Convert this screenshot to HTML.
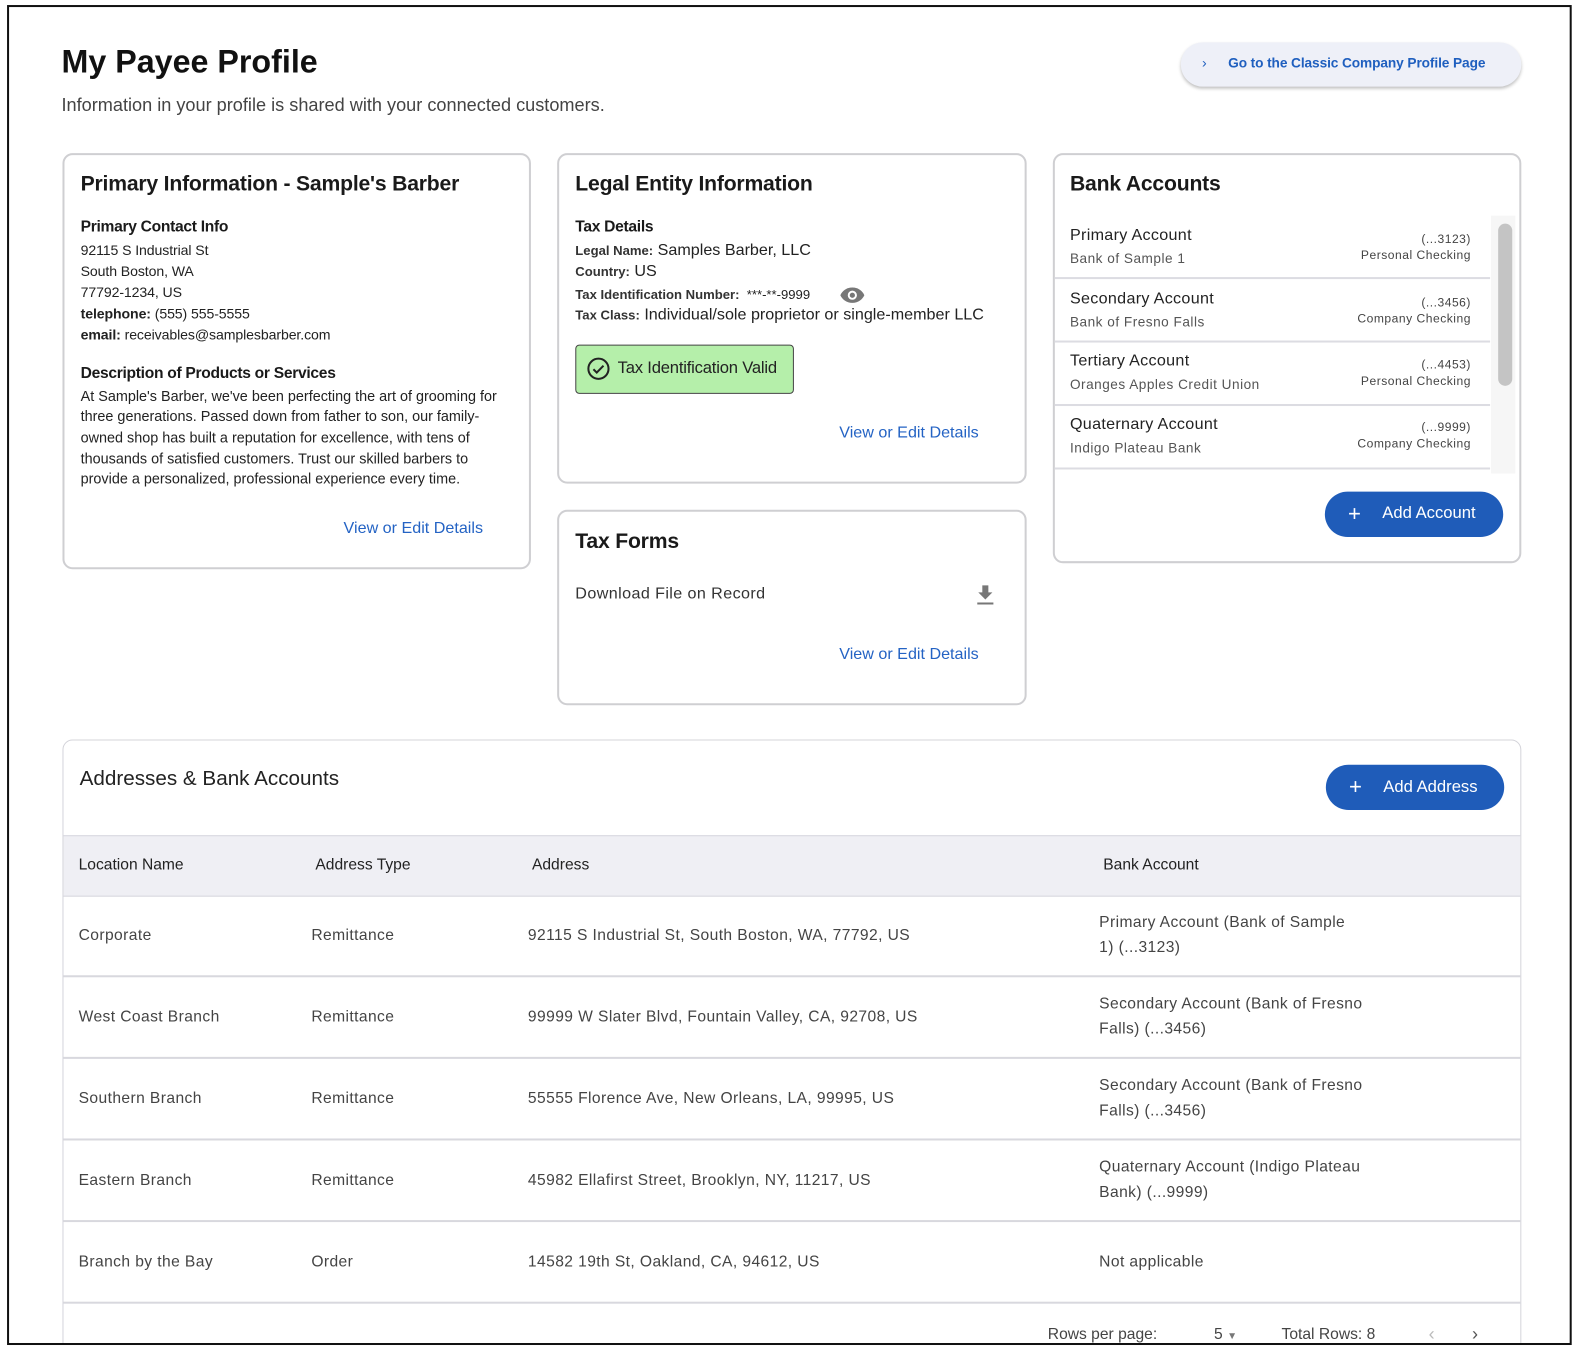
<!DOCTYPE html>
<html><head><meta charset="utf-8">
<style>
html,body{margin:0;padding:0;background:#fff;}
body{width:1580px;height:1352px;overflow:hidden;position:relative;font-family:"Liberation Sans",sans-serif;}
#wrap{position:absolute;left:0;top:0;width:1560px;height:1335px;transform-origin:0 0;transform:scale(1.0075,1.0075);}
#frame{position:absolute;left:7px;top:5px;width:1549px;height:1326px;border:2px solid #111;overflow:hidden;background:#fff;}
#in{position:absolute;left:-9px;top:-7px;width:1560px;height:1400px;}
.t{position:absolute;white-space:nowrap;line-height:1;}
.card{position:absolute;border:2px solid #cfcfd2;border-radius:10px;background:#fff;box-sizing:border-box;}
.h{font-weight:bold;font-size:21px;color:#1a1a1a;letter-spacing:-0.2px;}
.sh{font-weight:bold;font-size:15.5px;color:#1a1a1a;letter-spacing:-0.3px;}
.s{font-size:14px;color:#222;letter-spacing:-0.1px;}
.p{font-size:14.3px;color:#222;letter-spacing:0px;}
.lk{font-size:16px;color:#2463c4;}
.btn{position:absolute;background:#1f5cb9;border-radius:23px;color:#fff;}
.row{position:absolute;left:0;right:0;border-bottom:2px solid #dcdce2;}
.c{font-size:15.5px;color:#444;letter-spacing:0.4px;}
.bt{font-size:16px;color:#222;letter-spacing:0.3px;}
.bs{font-size:13.5px;color:#555;letter-spacing:0.5px;}
.br{font-size:12px;color:#444;letter-spacing:0.5px;text-align:right;}
</style></head><body>
<div id="wrap">
<div id="frame"><div id="in">

<div class="t" style="left:61px;top:45px;font-size:32px;font-weight:bold;color:#111;">My Payee Profile</div>
<div class="t" style="left:61px;top:95px;font-size:18px;color:#444;">Information in your profile is shared with your connected customers.</div>

<div style="position:absolute;left:1172px;top:42px;width:338px;height:44px;border-radius:22px;background:#eef0f8;box-shadow:0 2px 3px rgba(0,0,0,0.25);"></div>
<div class="t" style="left:1193px;top:55px;font-size:14px;color:#1f5fbf;">›</div>
<div class="t" style="left:1219px;top:56px;font-size:13.6px;font-weight:bold;color:#1f5fbf;letter-spacing:-0.1px;">Go to the Classic Company Profile Page</div>

<!-- Primary card -->
<div class="card" style="left:62px;top:152px;width:465px;height:413px;"></div>
<div class="t h" style="left:80px;top:172px;">Primary Information - Sample's Barber</div>
<div class="t sh" style="left:80px;top:218px;">Primary Contact Info</div>
<div class="t s" style="left:80px;top:241px;">92115 S Industrial St</div>
<div class="t s" style="left:80px;top:262px;">South Boston, WA</div>
<div class="t s" style="left:80px;top:283px;">77792-1234, US</div>
<div class="t s" style="left:80px;top:304px;"><b>telephone:</b> (555) 555-5555</div>
<div class="t s" style="left:80px;top:325px;"><b>email:</b> receivables@samplesbarber.com</div>
<div class="t sh" style="left:80px;top:363px;">Description of Products or Services</div>
<div class="t p" style="left:80px;top:387px;">At Sample's Barber, we've been perfecting the art of grooming for</div>
<div class="t p" style="left:80px;top:407px;">three generations. Passed down from father to son, our family-</div>
<div class="t p" style="left:80px;top:428px;">owned shop has built a reputation for excellence, with tens of</div>
<div class="t p" style="left:80px;top:449px;">thousands of satisfied customers. Trust our skilled barbers to</div>
<div class="t p" style="left:80px;top:469px;">provide a personalized, professional experience every time.</div>
<div class="t lk" style="left:341px;top:517px;">View or Edit Details</div>

<!-- Legal card -->
<div class="card" style="left:553px;top:152px;width:466px;height:328px;"></div>
<div class="t h" style="left:571px;top:172px;">Legal Entity Information</div>
<div class="t sh" style="left:571px;top:218px;">Tax Details</div>
<div class="t" style="left:571px;top:241px;font-size:16px;color:#222;"><b style="font-size:13px;color:#333;">Legal Name:</b> Samples Barber, LLC</div>
<div class="t" style="left:571px;top:262px;font-size:16px;color:#222;"><b style="font-size:13px;color:#333;">Country:</b> US</div>
<div class="t" style="left:571px;top:286px;font-size:13px;color:#222;"><b style="color:#333;">Tax Identification Number:</b>&nbsp; ***-**-9999</div>
<svg style="position:absolute;left:833px;top:284px" width="26" height="18" viewBox="0 0 24 16"><path d="M12 1C6.5 1 2.5 4.5 1 8c1.5 3.5 5.5 7 11 7s9.5-3.5 11-7C21.5 4.5 17.5 1 12 1z" fill="#777"/><circle cx="12" cy="8" r="4.2" fill="#fff"/><circle cx="12" cy="8" r="2.4" fill="#777"/></svg>
<div class="t" style="left:571px;top:305px;font-size:16px;color:#222;"><b style="font-size:13px;color:#333;">Tax Class:</b> Individual/sole proprietor or single-member LLC</div>
<div style="position:absolute;left:571px;top:342px;width:217px;height:49px;background:#b5efaa;border:1px solid #444;border-radius:4px;box-sizing:border-box;"></div>
<svg style="position:absolute;left:582px;top:354px" width="24" height="24" viewBox="0 0 24 24"><circle cx="12" cy="12" r="10" fill="none" stroke="#222" stroke-width="2"/><path d="M7 12.5l3.3 3.3L17 9" fill="none" stroke="#222" stroke-width="2"/></svg>
<div class="t" style="left:613px;top:357px;font-size:16.5px;color:#222;letter-spacing:-0.2px;">Tax Identification Valid</div>
<div class="t lk" style="left:833px;top:422px;">View or Edit Details</div>

<!-- Tax forms -->
<div class="card" style="left:553px;top:506px;width:466px;height:194px;"></div>
<div class="t h" style="left:571px;top:527px;">Tax Forms</div>
<div class="t" style="left:571px;top:582px;font-size:16px;color:#333;letter-spacing:0.4px;">Download File on Record</div>
<svg style="position:absolute;left:968px;top:580px" width="20" height="22" viewBox="0 0 20 22"><path d="M7 1h6v7h4l-7 7-7-7h4z" fill="#777"/><rect x="2" y="18" width="16" height="2" fill="#777"/></svg>
<div class="t lk" style="left:833px;top:642px;">View or Edit Details</div>

<!-- Bank card -->
<div class="card" style="left:1045px;top:152px;width:465px;height:407px;"></div>
<div class="t h" style="left:1062px;top:172px;">Bank Accounts</div>
<div style="position:absolute;left:1047px;top:214px;width:432px;height:256px;">
  <div class="row" style="top:0;height:61px;"></div>
  <div class="row" style="top:63px;height:61px;"></div>
  <div class="row" style="top:126px;height:61px;"></div>
  <div class="row" style="top:189px;height:61px;"></div>
</div>
<div style="position:absolute;left:1480px;top:214px;width:24px;height:256px;background:#f6f6f6;"></div>
<div style="position:absolute;left:1487px;top:222px;width:14px;height:161px;background:#c4c4c4;border-radius:7px;"></div>

<div class="t bt" style="left:1062px;top:226px;">Primary Account</div>
<div class="t bs" style="left:1062px;top:250px;">Bank of Sample 1</div>
<div class="t br" style="right:100px;top:231px;">(...3123)</div>
<div class="t br" style="right:100px;top:247px;">Personal Checking</div>

<div class="t bt" style="left:1062px;top:289px;">Secondary Account</div>
<div class="t bs" style="left:1062px;top:313px;">Bank of Fresno Falls</div>
<div class="t br" style="right:100px;top:294px;">(...3456)</div>
<div class="t br" style="right:100px;top:310px;">Company Checking</div>

<div class="t bt" style="left:1062px;top:351px;">Tertiary Account</div>
<div class="t bs" style="left:1062px;top:375px;">Oranges Apples Credit Union</div>
<div class="t br" style="right:100px;top:356px;">(...4453)</div>
<div class="t br" style="right:100px;top:372px;">Personal Checking</div>

<div class="t bt" style="left:1062px;top:414px;">Quaternary Account</div>
<div class="t bs" style="left:1062px;top:438px;">Indigo Plateau Bank</div>
<div class="t br" style="right:100px;top:418px;">(...9999)</div>
<div class="t br" style="right:100px;top:434px;">Company Checking</div>

<div class="btn" style="left:1315px;top:488px;width:177px;height:45px;"></div>
<div class="t" style="left:1338px;top:499px;font-size:22px;color:#fff;">+</div>
<div class="t" style="left:1372px;top:501px;font-size:16.5px;color:#fff;">Add Account</div>

<!-- Addresses -->
<div class="card" style="left:62px;top:734px;width:1448px;height:700px;border-width:1px;border-color:#d4d4da;"></div>
<div class="t" style="left:79px;top:763px;font-size:20.5px;color:#222;">Addresses &amp; Bank Accounts</div>
<div class="btn" style="left:1316px;top:759px;width:177px;height:45px;"></div>
<div class="t" style="left:1339px;top:770px;font-size:22px;color:#fff;">+</div>
<div class="t" style="left:1373px;top:773px;font-size:16.5px;color:#fff;">Add Address</div>

<div style="position:absolute;left:63px;top:829px;width:1446px;height:59px;background:#efeff4;border-top:1px solid #d6d6de;border-bottom:1px solid #d6d6de;"></div>
<div class="t" style="left:78px;top:851px;font-size:15.5px;color:#222;">Location Name</div>
<div class="t" style="left:313px;top:851px;font-size:15.5px;color:#222;">Address Type</div>
<div class="t" style="left:528px;top:851px;font-size:15.5px;color:#222;">Address</div>
<div class="t" style="left:1095px;top:851px;font-size:15.5px;color:#222;">Bank Account</div>

<div style="position:absolute;left:63px;top:968px;width:1446px;height:2px;background:#d8d8de;"></div>
<div style="position:absolute;left:63px;top:1049px;width:1446px;height:2px;background:#d8d8de;"></div>
<div style="position:absolute;left:63px;top:1130px;width:1446px;height:2px;background:#d8d8de;"></div>
<div style="position:absolute;left:63px;top:1211px;width:1446px;height:2px;background:#d8d8de;"></div>
<div style="position:absolute;left:63px;top:1292px;width:1446px;height:2px;background:#d8d8de;"></div>

<div class="t c" style="left:78px;top:921px;">Corporate</div>
<div class="t c" style="left:309px;top:921px;">Remittance</div>
<div class="t c" style="left:524px;top:921px;">92115 S Industrial St, South Boston, WA, 77792, US</div>
<div class="t c" style="left:1091px;top:908px;">Primary Account (Bank of Sample</div>
<div class="t c" style="left:1091px;top:933px;">1) (...3123)</div>

<div class="t c" style="left:78px;top:1002px;">West Coast Branch</div>
<div class="t c" style="left:309px;top:1002px;">Remittance</div>
<div class="t c" style="left:524px;top:1002px;">99999 W Slater Blvd, Fountain Valley, CA, 92708, US</div>
<div class="t c" style="left:1091px;top:989px;">Secondary Account (Bank of Fresno</div>
<div class="t c" style="left:1091px;top:1014px;">Falls) (...3456)</div>

<div class="t c" style="left:78px;top:1083px;">Southern Branch</div>
<div class="t c" style="left:309px;top:1083px;">Remittance</div>
<div class="t c" style="left:524px;top:1083px;">55555 Florence Ave, New Orleans, LA, 99995, US</div>
<div class="t c" style="left:1091px;top:1070px;">Secondary Account (Bank of Fresno</div>
<div class="t c" style="left:1091px;top:1095px;">Falls) (...3456)</div>

<div class="t c" style="left:78px;top:1164px;">Eastern Branch</div>
<div class="t c" style="left:309px;top:1164px;">Remittance</div>
<div class="t c" style="left:524px;top:1164px;">45982 Ellafirst Street, Brooklyn, NY, 11217, US</div>
<div class="t c" style="left:1091px;top:1151px;">Quaternary Account (Indigo Plateau</div>
<div class="t c" style="left:1091px;top:1176px;">Bank) (...9999)</div>

<div class="t c" style="left:78px;top:1245px;">Branch by the Bay</div>
<div class="t c" style="left:309px;top:1245px;">Order</div>
<div class="t c" style="left:524px;top:1245px;">14582 19th St, Oakland, CA, 94612, US</div>
<div class="t c" style="left:1091px;top:1245px;">Not applicable</div>

<div class="t" style="left:1040px;top:1317px;font-size:15.5px;color:#444;">Rows per page:</div>
<div class="t" style="left:1205px;top:1317px;font-size:15.5px;color:#444;">5 <span style="font-size:10px;color:#777;">▼</span></div>
<div class="t" style="left:1272px;top:1317px;font-size:15.5px;color:#444;">Total Rows: 8</div>
<div class="t" style="left:1418px;top:1315px;font-size:18px;color:#bbb;">‹</div>
<div class="t" style="left:1461px;top:1315px;font-size:18px;color:#555;">›</div>

</div></div>
</div>
</body></html>
